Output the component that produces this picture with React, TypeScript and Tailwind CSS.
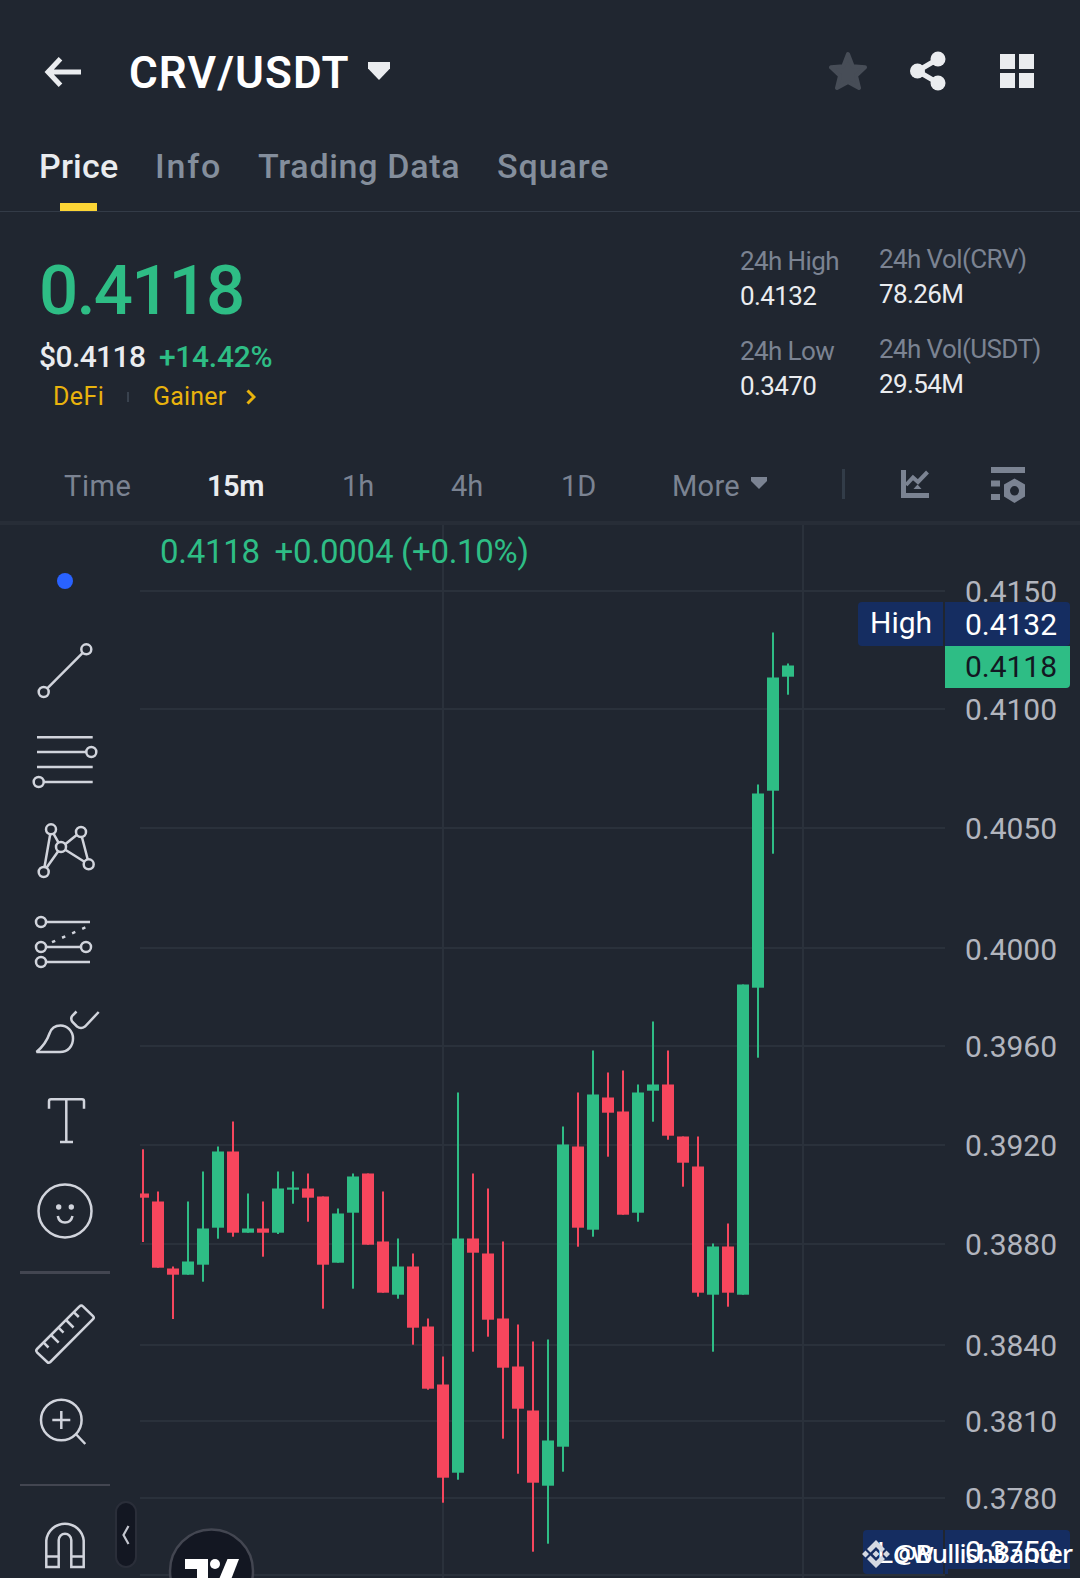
import React from 'react';

type Candle = [high: number, top: number, bottom: number, low: number, up: 0 | 1];

const TABS = [
  { label: 'Price', active: true, className: 'ml-[39px] w-[78px] tracking-[0.2px]' },
  { label: 'Info', active: false, className: 'ml-[38px] w-[67px] tracking-[1.8px]' },
  { label: 'Trading Data', active: false, className: 'ml-[36px] w-[201px] tracking-[0.7px]' },
  { label: 'Square', active: false, className: 'ml-[38px] w-[113px] tracking-[0.9px]' },
];

const AXIS = [
  { price: '0.4150', y: 591, baseline: 602 },
  { price: '0.4100', y: 709, baseline: 720 },
  { price: '0.4050', y: 828, baseline: 839 },
  { price: '0.4000', y: 948, baseline: 960 },
  { price: '0.3960', y: 1046, baseline: 1057 },
  { price: '0.3920', y: 1145, baseline: 1156 },
  { price: '0.3880', y: 1244, baseline: 1255 },
  { price: '0.3840', y: 1345, baseline: 1356 },
  { price: '0.3810', y: 1421, baseline: 1432 },
  { price: '0.3780', y: 1498, baseline: 1509 },
];

const CANDLES: Candle[] = [
  [1149.3, 1193.5, 1197.7, 1242, 0],
  [1191.5, 1201.5, 1267.7, 1267.7, 0],
  [1266.5, 1268.5, 1274.7, 1319, 0],
  [1201.5, 1261.5, 1274.7, 1274.7, 1],
  [1171.5, 1228.5, 1264.7, 1281.7, 1],
  [1146.5, 1151.5, 1227.7, 1238.7, 1],
  [1121.5, 1151.5, 1232.7, 1236.7, 0],
  [1193.5, 1228.5, 1232.7, 1232.7, 1],
  [1201.5, 1228.5, 1232.7, 1256.7, 0],
  [1171.5, 1188.5, 1232.7, 1234, 1],
  [1171.5, 1187.5, 1189.7, 1203.7, 1],
  [1173.5, 1188.5, 1197.7, 1221.7, 0],
  [1196.5, 1196.5, 1264.7, 1308.7, 0],
  [1208.5, 1213.5, 1262.7, 1262.7, 1],
  [1173.5, 1176.5, 1212.7, 1288.7, 1],
  [1173.5, 1173.5, 1244.7, 1244.7, 0],
  [1191.5, 1241.5, 1292.7, 1292.7, 0],
  [1238.5, 1266.5, 1294.7, 1298.7, 1],
  [1253.5, 1266.5, 1327.7, 1344.7, 0],
  [1318.5, 1326.5, 1388.7, 1389.7, 0],
  [1356.5, 1384.5, 1477.7, 1502.7, 0],
  [1092.5, 1238.5, 1472.7, 1479.7, 1],
  [1173.5, 1238.5, 1252.7, 1351.7, 0],
  [1188.5, 1253.5, 1319.7, 1336.7, 0],
  [1241.5, 1318.5, 1367.7, 1438.7, 0],
  [1324.5, 1366.5, 1408.7, 1473.7, 0],
  [1341.5, 1410.5, 1482.7, 1551.7, 0],
  [1339.5, 1440.5, 1485.7, 1543.7, 1],
  [1126.5, 1144.5, 1446.7, 1471.7, 1],
  [1092.5, 1146.5, 1227.7, 1246.7, 0],
  [1050.5, 1094.5, 1229.7, 1236.7, 1],
  [1072.5, 1097.5, 1112.7, 1156.7, 0],
  [1070.5, 1111.5, 1214.7, 1214.7, 0],
  [1084.5, 1092.5, 1212.7, 1221.7, 1],
  [1021.5, 1084.5, 1090.7, 1121.7, 1],
  [1050.5, 1084.5, 1135.7, 1139.7, 0],
  [1136.5, 1136.5, 1162.7, 1186.7, 0],
  [1136.5, 1166.5, 1292.7, 1296.7, 0],
  [1243.5, 1246.5, 1294.7, 1351.7, 1],
  [1223.5, 1246.5, 1292.7, 1306.7, 0],
  [984.5, 984.5, 1294.7, 1294.7, 1],
  [784.5, 793.5, 987.7, 1057.7, 1],
  [632.5, 677.5, 790.7, 853.7, 1],
  [663.5, 665.5, 676.7, 694.7, 1],
];

const Header: React.FC = () => (
  <header className="flex h-[145px] items-center text-[#eaecef]">
    <svg className="mb-[2px] ml-[44px] h-[30px] w-[38px]" viewBox="0 0 38 30" fill="none" stroke="currentColor" strokeWidth="5">
      <path d="M37 15H5M16.500 1.800L4 15L16.500 28.200" />
    </svg>
    <h1 className="ml-[47px] w-[225px] whitespace-nowrap text-[44px] font-semibold leading-none tracking-[1.1px] text-white">CRV/USDT</h1>
    <svg className="mb-[3px] ml-[13px] h-[18px] w-[24px]" viewBox="0 0 24 18" fill="currentColor">
      <path d="M1 0H23V6.500L12 18L1 6.500Z" />
    </svg>
    <svg className="mb-[3px] ml-auto h-[40px] w-[38px]" viewBox="0 0 38 40" fill="#474d57" stroke="#474d57" strokeWidth="4" strokeLinejoin="round">
      <path d="M19 3L23.700 15.200L36 16.300L27 24.700L30 37L19 31L8 37L11 24.700L2 16.300L14.300 15.200Z" />
    </svg>
    <svg className="mb-[4px] ml-[42px] h-[40px] w-[38px]" viewBox="0 0 38 40" fill="currentColor" stroke="currentColor">
      <path d="M8.500 20L29 8M8.500 20L29 32" strokeWidth="5" />
      <circle cx="8.500" cy="20" r="7.500" stroke="none" />
      <circle cx="29" cy="8" r="7.500" stroke="none" />
      <circle cx="29" cy="32" r="7.500" stroke="none" />
    </svg>
    <div className="mb-[3px] ml-[53px] mr-[46px] grid grid-cols-2 gap-1">
      <span className="size-[15px] bg-current" />
      <span className="size-[15px] bg-current" />
      <span className="size-[15px] bg-current" />
      <span className="size-[15px] bg-current" />
    </div>
  </header>
);

const Tabs: React.FC = () => (
  <nav className="flex h-[67px] border-b border-[#333b47] pt-[4px] text-[34px] font-medium leading-none">
    {TABS.map((tab) => (
      <div key={tab.label} className={`flex flex-col justify-between whitespace-nowrap ${tab.className} ${tab.active ? 'text-[#eaecef]' : 'text-[#848e9c]'}`}>
        <span>{tab.label}</span>
        {tab.active && <span className="h-[8px] w-[37px] self-center bg-[#fcd535]" />}
      </div>
    ))}
  </nav>
);

const Stat: React.FC<{ label: string; value: string }> = ({ label, value }) => (
  <div className="whitespace-nowrap text-[26px] leading-none tracking-[-0.6px]">
    <div className="text-[#7b8392]">{label}</div>
    <div className="mt-[9px] text-[#eaecef]">{value}</div>
  </div>
);

const Summary: React.FC = () => (
  <section className="flex h-[238px]">
    <div className="w-[740px] pl-[39px] pt-[44px]">
      <div className="text-[69px] font-medium leading-none tracking-[-1.8px] text-[#2ebd85]">0.4118</div>
      <div className="mt-[17px] flex text-[30px] font-medium leading-none">
        <span className="w-[120px] tracking-[-0.6px] text-[#eaecef]">$0.4118</span>
        <span className="tracking-[-0.3px] text-[#2ebd85]">+14.42%</span>
      </div>
      <div className="mt-[12px] flex items-center text-[25px] leading-none text-[#e9b30d]">
        <span className="ml-[14px] w-[74px] tracking-[0.4px]">DeFi</span>
        <span className="h-[10px] w-[2px] bg-[#39424e]" />
        <span className="ml-[24px] w-[93px] tracking-[0.2px]">Gainer</span>
        <svg className="h-[16px] w-[10px]" viewBox="0 0 10 16" fill="none" stroke="currentColor" strokeWidth="3">
          <path d="M1.500 1.500L8 8L1.500 14.500" />
        </svg>
      </div>
    </div>
    <div className="flex w-[139px] flex-col gap-[29px] pt-[36px]">
      <Stat label="24h High" value="0.4132" />
      <Stat label="24h Low" value="0.3470" />
    </div>
    <div className="flex flex-col gap-[29px] pt-[34px]">
      <Stat label="24h Vol(CRV)" value="78.26M" />
      <Stat label="24h Vol(USDT)" value="29.54M" />
    </div>
  </section>
);

const Intervals: React.FC = () => (
  <div className="flex h-[71px] items-center whitespace-nowrap pt-[2px] text-[29px] leading-none text-[#7b8392]">
    <span className="ml-[64px] w-[143px] tracking-[0.6px]">Time</span>
    <span className="w-[135px] font-semibold tracking-[-0.5px] text-[#eaecef]">15m</span>
    <span className="w-[109px]">1h</span>
    <span className="w-[110px]">4h</span>
    <span className="w-[111px]">1D</span>
    <span className="w-[79px] tracking-[0.3px]">More</span>
    <svg className="mb-[7px] h-[12px] w-[16px]" viewBox="0 0 16 12" fill="currentColor">
      <path d="M0 0H16V4L8 12L0 4Z" />
    </svg>
    <span className="mb-[5px] ml-[75px] h-[30px] w-[3px] bg-[#323c48]" />
    <svg className="mb-[5px] ml-[56px] h-[28px] w-[28px]" viewBox="0 0 28 28" fill="none" stroke="currentColor" strokeWidth="4">
      <path d="M2.500 0V25.500H28" strokeWidth="5" />
      <path d="M5 15L12 7.500L17 12L26.500 2" />
      <path d="M12.500 19L16.500 14.500L20.500 19Z" fill="currentColor" stroke="none" />
    </svg>
    <svg className="mb-[3px] ml-[62px] h-[36px] w-[34px]" viewBox="0 0 34 36" fill="currentColor">
      <path d="M0 0H34V6H0ZM0 13.500H9V19.500H0ZM0 27H9V33H0Z" />
      <path fillRule="evenodd" d="M23.500 11.500L34 17.500V29.500L23.500 36L13 29.500V17.500ZM23.500 19A4.500 4.800 0 1 0 23.500 28.600A4.500 4.800 0 1 0 23.500 19Z" />
    </svg>
  </div>
);

const Tool: React.FC<{ children: React.ReactNode }> = ({ children }) => (
  <svg className="h-[90px] w-[116px] shrink-0" viewBox="0 0 116 90" fill="none" stroke="#d1d4dc" strokeWidth="2.5">
    {children}
  </svg>
);

const Toolbar: React.FC = () => (
  <aside className="relative flex w-[140px] shrink-0 flex-col">
    <div className="flex h-[101px] shrink-0 pl-[57px] pt-[48px]">
      <span className="size-[16px] rounded-full bg-[#2962ff]" />
    </div>
    <Tool>
      <path d="M47.300 62.400L82.700 26.900" />
      <circle cx="43.700" cy="66" r="5" />
      <circle cx="86.300" cy="23.300" r="5" />
    </Tool>
    <Tool>
      <path d="M37 21.300H92.700M37 36H86.300M37 51H92.700M43.700 66H92.700" />
      <circle cx="91.300" cy="36" r="5" />
      <circle cx="38.700" cy="66" r="5" />
    </Tool>
    <Tool>
      <path d="M50.200 28.200L44.500 61M53.500 27.700L58.500 36.700M58.200 45.200L46.500 61.800M65.200 38.200L77 28.800M65.300 43.700L84.400 55.700M81.900 31L87.700 53.300" />
      <circle cx="51" cy="23.300" r="5" />
      <circle cx="81" cy="26" r="5" />
      <circle cx="61" cy="41" r="5" />
      <circle cx="43.700" cy="66" r="5" />
      <circle cx="88.700" cy="58.300" r="5" />
    </Tool>
    <Tool>
      <path d="M46 26H90M46 51H81M46 66H90" />
      <path d="M52 46.200L87 30.700" strokeDasharray="3.500 7.500" />
      <circle cx="41" cy="26" r="5" />
      <circle cx="41" cy="51" r="5" />
      <circle cx="86" cy="51" r="5" />
      <circle cx="41" cy="66" r="5" />
    </Tool>
    <Tool>
      <path d="M36.500 66H60C68 66 73 60 73 52.500C73 45 67 39.500 60.500 39.500C54 39.500 51 43 49.500 47.500C47 55 43 60.500 36.500 66Z" strokeLinejoin="bevel" />
      <path d="M76.500 25.500L72.500 29.500Q70 32.500 72.500 36L77 40.500Q81 43.500 85 40.500L98.700 26" />
    </Tool>
    <Tool>
      <path d="M49 32.700V25.300Q49 23.300 51 23.300H82Q84 23.300 84 25.300V32.700M66.300 23.300V66M60 66H73" />
    </Tool>
    <Tool>
      <circle cx="65" cy="45" r="26.500" />
      <circle cx="58.700" cy="41" r="2.700" fill="#d1d4dc" stroke="none" />
      <circle cx="71.300" cy="41" r="2.700" fill="#d1d4dc" stroke="none" />
      <path d="M57.800 50Q59 56.500 65 56.500Q71 56.500 72.500 50" />
    </Tool>
    <div className="ml-[20px] mt-[15px] h-[3px] w-[90px] shrink-0 bg-[#434651]" />
    <div className="h-[15px] shrink-0" />
    <Tool>
      <path d="M79.500 17.500Q81.300 15.500 83 17.500L93 27Q94.500 28.700 93 30.200L50.300 73Q48.700 74.500 47.200 73L37 63.300Q35.500 61.500 37 60Z" />
      <path d="M43.700 53.700L48.500 58.500M51 46L58.700 53.700M58.500 38.700L63.500 43.700M66 31L73.500 38.500M74 23.300L78.800 28" />
    </Tool>
    <Tool>
      <circle cx="61.300" cy="41" r="20.300" />
      <path d="M52.300 41H70.300M61.300 32V50M75.800 55L85.300 65" />
    </Tool>
    <div className="ml-[20px] mt-[15px] h-[2px] w-[90px] shrink-0 bg-[#434651]" />
    <div className="h-[12px] shrink-0" />
    <Tool>
      <path d="M46.300 69V42.500A18.800 18.800 0 0 1 83.700 42.500V69H71.300V42A6.300 6.300 0 0 0 58.700 42V69ZM46.300 58.500H58.700M71.300 58.500H83.700" />
    </Tool>
    <button className="absolute left-[115px] top-[976px] flex h-[67px] w-[22px] items-center justify-center rounded-[11px] border-2 border-[#2a2e39] bg-[#131722]">
      <svg className="h-[20px] w-[8px]" viewBox="0 0 8 20" fill="none" stroke="#c3c6cf" strokeWidth="2.200">
        <path d="M6.500 1L1.500 10L6.500 19" />
      </svg>
    </button>
  </aside>
);

const Chart: React.FC = () => (
  <svg className="h-[1053px] w-[940px] shrink-0" viewBox="140 525 940 1053" fontFamily="Roboto, sans-serif" fontSize="30">
    <g fill="#2a313b">
      {AXIS.map((tick) => (
        <rect key={tick.y} x="140" y={tick.y - 1} width="805" height="2" />
      ))}
      <rect x="140" y="1574" width="805" height="2" />
      <rect x="442" y="521" width="2" height="1057" />
      <rect x="802" y="521" width="2" height="1057" />
    </g>

    {CANDLES.map(([high, top, bottom, low, up], i) => {
      const x = 143 + i * 15;
      return (
        <g key={i} fill={up ? '#2ebd85' : '#f6465d'}>
          <rect x={x - 1} y={high} width="2" height={low - high} />
          <rect x={x - 6} y={top} width="12" height={bottom - top} />
        </g>
      );
    })}

    <g fill="#2ebd85" fontSize="33">
      <text x="160" y="562.500" textLength="100" lengthAdjust="spacing">0.4118</text>
      <text x="274.500" y="562.500" textLength="119" lengthAdjust="spacing">+0.0004</text>
      <text x="401" y="562.500" textLength="128" lengthAdjust="spacing">(+0.10%)</text>
    </g>

    <g fill="#b2b5be">
      {AXIS.map((tick) => (
        <text key={tick.y} x="965" y={tick.baseline} textLength="92">{tick.price}</text>
      ))}
    </g>

    <g fill="#152d61">
      <path d="M862 602H943V646H862Q858 646 858 642V606Q858 602 862 602Z" />
      <path d="M945 602H1066Q1070 602 1070 606V642Q1070 646 1066 646H945Z" />
      <path d="M867 1530H943V1574H867Q863 1574 863 1570V1534Q863 1530 867 1530Z" />
      <path d="M945 1530H1066Q1070 1530 1070 1534V1569H948V1574H945Z" />
    </g>
    <path d="M945 646H1070V684Q1070 688 1066 688H945Z" fill="#2ebd85" />
    <g fill="#ffffff">
      <text x="870" y="633" textLength="62">High</text>
      <text x="965" y="635" textLength="92">0.4132</text>
      <text x="877" y="1563" textLength="57">Low</text>
      <text x="965" y="1562" textLength="92">0.3750</text>
    </g>
    <text x="965" y="677" textLength="92" fill="#131722">0.4118</text>

    <circle cx="211.500" cy="1571" r="41.500" fill="#131722" stroke="#434651" strokeWidth="2.500" />
    <g fill="#ffffff">
      <path d="M185 1559H208V1590H197V1569H185Z" />
      <circle cx="215" cy="1564" r="5" />
      <path d="M227.500 1559H239L227 1590H214.500Z" />
    </g>

    <g fill="#d5d9e2">
      <path d="M876 1540L885 1549L881.500 1552.500L876 1547L870.500 1552.500L867 1549Z" />
      <path d="M876 1568L885 1559L881.500 1555.500L876 1561L870.500 1555.500L867 1559Z" />
      <path d="M876 1550.500L879.500 1554L876 1557.500L872.500 1554ZM865.500 1550.500L869 1554L865.500 1557.500L862 1554ZM886.500 1550.500L890 1554L886.500 1557.500L883 1554Z" />
    </g>
    <text x="893" y="1563" textLength="180" fill="#ffffff" fontFamily="Noto Sans, sans-serif" fontSize="26" fontWeight="500">@BullishBanter</text>
  </svg>
);

const App: React.FC = () => {
  return (
    <div className="h-[1578px] w-[1080px] overflow-hidden bg-[#202630] font-['Roboto',sans-serif]">
      <Header />
      <Tabs />
      <Summary />
      <Intervals />
      <main className="flex h-[1057px] overflow-hidden border-t-4 border-[#272d37]">
        <Toolbar />
        <Chart />
      </main>
    </div>
  );
};

export default App;
